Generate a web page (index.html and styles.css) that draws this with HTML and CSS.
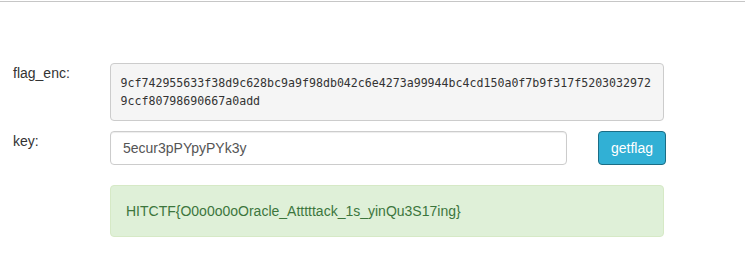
FILE: index.html
```html
<!DOCTYPE html>
<html lang="en">
<head>
  <meta charset="UTF-8">
  <meta name="viewport" content="width=device-width, initial-scale=1.0">
  <title>getflag</title>
  <link rel="stylesheet" href="styles.css">
</head>
<body>

  <div class="page">
    <form class="flag-form">
      <div class="form-row">
        <label class="control-label">flag_enc:</label>
        <pre class="flag-enc">9cf742955633f38d9c628bc9a9f98db042c6e4273a99944bc4cd150a0f7b9f317f52030329729ccf80798690667a0add</pre>
      </div>
      <div class="form-row key-row">
        <label class="control-label" for="key">key:</label>
        <input type="text" id="key" class="form-control" value="5ecur3pPYpyPYk3y">
        <button type="button" class="btn-info">getflag</button>
      </div>
      <div class="alert-success">HITCTF{O0o0o0oOracle_Atttttack_1s_yinQu3S17ing}</div>
    </form>
  </div>

</body>
</html>
```

FILE: styles.css
```css
body {
  font-family: 'Liberation Sans', Arial, sans-serif;
  font-size: 14px;
  line-height: 20px;
  color: #333;
  margin: 0;
  padding: 0;
  background-color: #fff;
}

.page {
  margin-top: 1px;
  border-top: 1px solid #c6c6c6;
  padding-top: 61px;
}

.form-row {
  display: flex;
  align-items: flex-start;
}

.control-label {
  box-sizing: border-box;
  width: 110px;
  padding-left: 13px;
  color: #333;
}

.flag-enc {
  box-sizing: border-box;
  width: 554px;
  margin: 0;
  padding: 9.5px;
  font-family: 'DejaVu Sans Mono', monospace;
  font-size: 11.6px;
  line-height: 18.3px;
  color: #333;
  background-color: #f5f5f5;
  border: 1px solid #ccc;
  border-radius: 4px;
  white-space: pre-wrap;
  word-break: break-all;
}

.key-row {
  margin-top: 10px;
}

.form-control {
  box-sizing: border-box;
  width: 457px;
  height: 34px;
  padding: 6px 12px;
  font-family: 'Liberation Sans', Arial, sans-serif;
  font-size: 14px;
  color: #555;
  border: 1px solid #ccc;
  border-radius: 4px;
  box-shadow: inset 0 1px 1px rgba(0, 0, 0, 0.075);
  outline: none;
}

.btn-info {
  box-sizing: border-box;
  margin-left: 31px;
  height: 34px;
  padding: 6px 12px;
  font-family: 'Liberation Sans', Arial, sans-serif;
  font-size: 14px;
  line-height: 20px;
  color: #fff;
  background-color: #31b0d5;
  border: 1px solid #1b6d85;
  border-radius: 4px;
  cursor: pointer;
}

.alert-success {
  box-sizing: border-box;
  width: 554px;
  margin: 20px 0 0 110px;
  padding: 15px;
  color: #3c763d;
  background-color: #dff0d8;
  border: 1px solid #d6e9c6;
  border-radius: 4px;
}
```
